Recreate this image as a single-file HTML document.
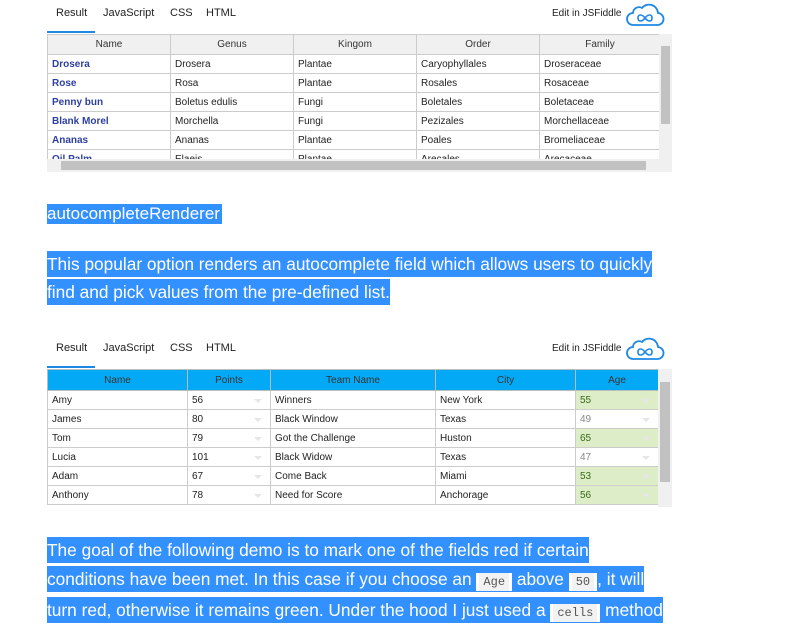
<!DOCTYPE html>
<html><head><meta charset="utf-8"><style>
*{margin:0;padding:0;box-sizing:border-box}
body{width:800px;height:626px;background:#fff;position:relative;overflow:hidden;font-family:"Liberation Sans",sans-serif}
.abs{position:absolute}
.tab{position:absolute;font-size:11px;color:#222}
.grid{position:absolute;border-collapse:collapse;font-size:10px;table-layout:fixed}
.grid td,.grid th{border:1px solid #ccc;height:19px;padding:0 4px;white-space:nowrap;overflow:hidden;font-weight:normal;color:#222}
.grid th{background:#f0f0f0;text-align:center;height:20px;color:#333}
.g2 th{background:#03a9f4;border-color:#bbb;height:21px;color:#333}
.grid td.a{color:#2d3fa0;font-weight:bold}
.sel{background:#3390ff;color:#fff;font-family:"Liberation Sans",sans-serif}
.grid td.grn{background:#dcedc8;color:#3a6a1a}
.grid td.gry{color:#888}
.dd{position:relative}
.dd:after{content:"";position:absolute;right:8px;top:8px;border-left:4px solid transparent;border-right:4px solid transparent;border-top:4px solid #e6e6e6}
code{font-family:"Liberation Mono",monospace;font-size:12px;background:#f2f2f2;color:#555;padding:2px 4px;border-left:3px solid #fff;border-right:3px solid #fff}
</style></head><body>

<div class="tab" style="left:56px;top:7px">Result</div>
<div class="tab" style="left:103px;top:7px">JavaScript</div>
<div class="tab" style="left:170px;top:7px">CSS</div>
<div class="tab" style="left:206px;top:7px">HTML</div>
<div class="abs" style="left:47px;top:31px;width:48px;height:2px;background:#1e88e5"></div>
<div class="tab" style="left:552px;top:8px;font-size:10px">Edit in JSFiddle</div>
<svg class="abs" style="left:625px;top:2px" width="40" height="25" viewBox="0 0 40 25"><path d="M8 23 H32 A6 6 0 0 0 33 11 A9 9 0 0 0 17 6 A6 6 0 0 0 8 11 A6 6 0 0 0 8 23 Z" fill="none" stroke="#1e88e5" stroke-width="1.8"/><path d="M20 16 C17 12 13 12 13 16 C13 20 17 20 20 16 C23 12 27 12 27 16 C27 20 23 20 20 16Z" fill="none" stroke="#1e88e5" stroke-width="1.6"/></svg>

<div class="abs" style="left:47px;top:34px;width:612px;height:125px;overflow:hidden">
<table class="grid" style="left:0;top:0;width:613px">
<colgroup><col style="width:123px"><col style="width:123px"><col style="width:123px"><col style="width:123px"><col style="width:121px"></colgroup>
<tr><th>Name</th><th>Genus</th><th>Kingom</th><th>Order</th><th>Family</th></tr>
<tr><td class="a">Drosera</td><td>Drosera</td><td>Plantae</td><td>Caryophyllales</td><td>Droseraceae</td></tr>
<tr><td class="a">Rose</td><td>Rosa</td><td>Plantae</td><td>Rosales</td><td>Rosaceae</td></tr>
<tr><td class="a">Penny bun</td><td>Boletus edulis</td><td>Fungi</td><td>Boletales</td><td>Boletaceae</td></tr>
<tr><td class="a">Blank Morel</td><td>Morchella</td><td>Fungi</td><td>Pezizales</td><td>Morchellaceae</td></tr>
<tr><td class="a">Ananas</td><td>Ananas</td><td>Plantae</td><td>Poales</td><td>Bromeliaceae</td></tr>
<tr><td class="a">Oil Palm</td><td>Elaeis</td><td>Plantae</td><td>Arecales</td><td>Arecaceae</td></tr>
</table></div>
<div class="abs" style="left:659px;top:34px;width:13px;height:125px;background:#f0f0f0"></div>
<div class="abs" style="left:661px;top:46px;width:9px;height:78px;background:#c1c1c1"></div>
<div class="abs" style="left:47px;top:159px;width:625px;height:13px;background:#f0f0f0"></div>
<div class="abs" style="left:61px;top:161px;width:585px;height:9px;background:#c1c1c1"></div>

<div class="abs sel" style="left:47px;top:204px;font-size:17px;line-height:20px;padding-right:2px">autocompleteRenderer</div>
<div class="abs" style="left:47px;top:250px;font-size:17.3px;line-height:28px;width:700px">
<span class="sel" style="padding:3px 0">This popular option renders an autocomplete field which allows users to quickly</span><br>
<span class="sel" style="padding:3px 0">find and pick values from the pre-defined list.</span></div>

<div class="tab" style="left:56px;top:342px">Result</div>
<div class="tab" style="left:103px;top:342px">JavaScript</div>
<div class="tab" style="left:170px;top:342px">CSS</div>
<div class="tab" style="left:206px;top:342px">HTML</div>
<div class="abs" style="left:47px;top:366px;width:48px;height:2px;background:#1e88e5"></div>
<div class="tab" style="left:552px;top:343px;font-size:10px">Edit in JSFiddle</div>
<svg class="abs" style="left:625px;top:336px" width="40" height="25" viewBox="0 0 40 25"><path d="M8 23 H32 A6 6 0 0 0 33 11 A9 9 0 0 0 17 6 A6 6 0 0 0 8 11 A6 6 0 0 0 8 23 Z" fill="none" stroke="#1e88e5" stroke-width="1.8"/><path d="M20 16 C17 12 13 12 13 16 C13 20 17 20 20 16 C23 12 27 12 27 16 C27 20 23 20 20 16Z" fill="none" stroke="#1e88e5" stroke-width="1.6"/></svg>

<table class="grid g2" style="left:47px;top:369px;width:611px">
<colgroup><col style="width:140px"><col style="width:83px"><col style="width:165px"><col style="width:140px"><col style="width:83px"></colgroup>
<tr><th>Name</th><th>Points</th><th>Team Name</th><th>City</th><th>Age</th></tr>
<tr><td>Amy</td><td class="dd">56</td><td>Winners</td><td>New York</td><td class="dd grn">55</td></tr>
<tr><td>James</td><td class="dd">80</td><td>Black Window</td><td>Texas</td><td class="dd gry">49</td></tr>
<tr><td>Tom</td><td class="dd">79</td><td>Got the Challenge</td><td>Huston</td><td class="dd grn">65</td></tr>
<tr><td>Lucia</td><td class="dd">101</td><td>Black Widow</td><td>Texas</td><td class="dd gry">47</td></tr>
<tr><td>Adam</td><td class="dd">67</td><td>Come Back</td><td>Miami</td><td class="dd grn">53</td></tr>
<tr><td>Anthony</td><td class="dd">78</td><td>Need for Score</td><td>Anchorage</td><td class="dd grn">56</td></tr>
</table>
<div class="abs" style="left:658px;top:369px;width:14px;height:138px;background:#f0f0f0"></div>
<div class="abs" style="left:660px;top:382px;width:10px;height:100px;background:#c1c1c1"></div>

<div class="abs" style="left:47px;top:536px;font-size:17.3px;line-height:28.5px;width:700px">
<span class="sel" style="padding:3px 0">The goal of the following demo is to mark one of the fields red if certain</span><br>
<span class="sel" style="padding:3px 0">conditions have been met. In this case if you choose an <code>Age</code> above <code>50</code>, it will</span><br>
<span class="sel" style="padding:3px 0">turn red, otherwise it remains green. Under the hood I just used a <code>cells</code> method</span></div>
</body></html>
